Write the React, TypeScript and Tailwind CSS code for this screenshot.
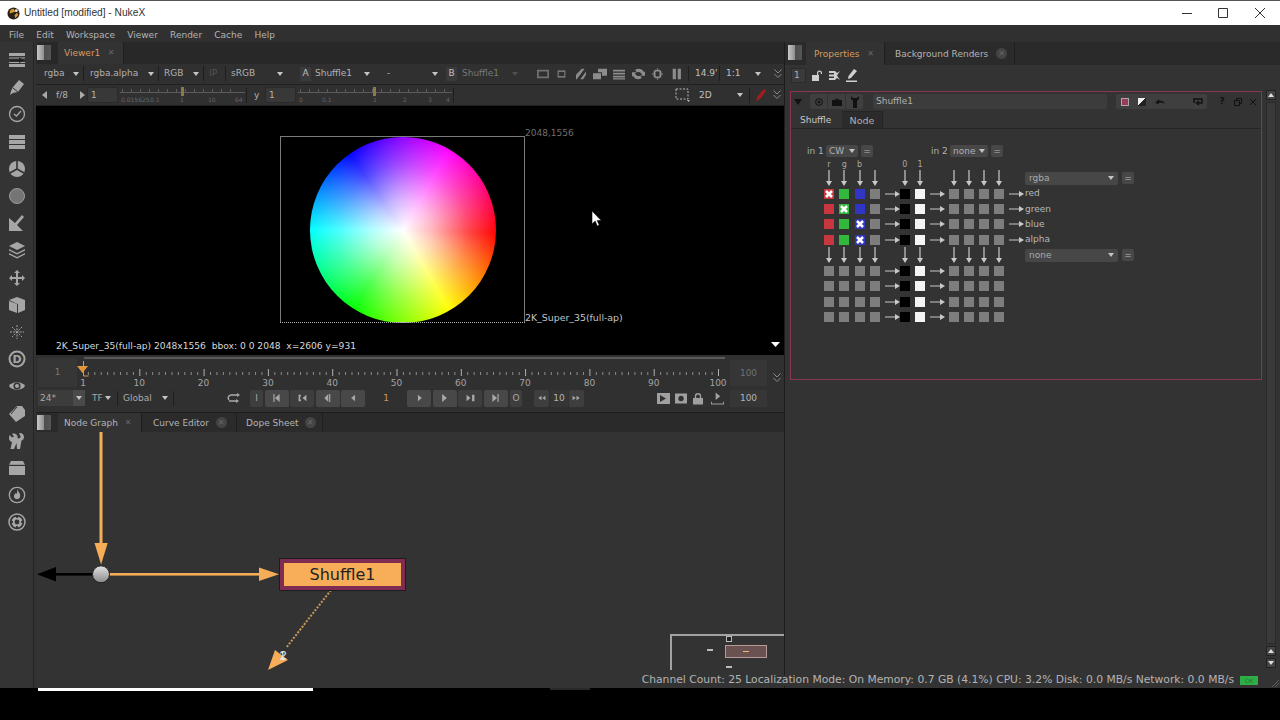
import React from 'react';

const Tri = ({ className = 'text-[#c4c4c4]' }: { className?: string }) => (
  <svg viewBox="0 0 6 4" className={`w-[6px] h-[4px] shrink-0 ${className}`}><path d="M0 0h6L3 4z" fill="currentColor" /></svg>
);
const Sep = ({ m = 'mx-[3px]' }: { m?: string }) => <div className={`w-px h-[15px] bg-[#1e1e1e] shrink-0 ${m}`} />;
const Chevrons = () => (
  <svg viewBox="0 0 8 10" className="w-[8px] h-[10px] text-[#8a8a8a] shrink-0" fill="none" stroke="currentColor"><path d="M.5 .5 4 4 7.5 .5M.5 5 4 8.5 7.5 5" /></svg>
);
const Grip = () => (
  <div className="w-[14px] h-[15px] shrink-0 bg-[linear-gradient(90deg,#c8c8c8_0%,#8e8e8e_50%,#4e4e4e_50%,#555_100%)]" />
);
const Close = ({ round = false }: { round?: boolean }) => (
  <span className={`flex items-center justify-center w-[11px] h-[11px] rounded-full text-[8px] font-bold ${round ? 'bg-[#444] text-[#666]' : 'text-[#666]'}`}>✕</span>
);

function Tab({ label, active, accent, w, pad }: { label: string; active?: boolean; accent?: boolean; w: string; pad: string }) {
  return (
    <div className={`${w} ${pad} h-full flex items-center justify-between shrink-0 border-r border-[#1f1f1f] rounded-t-[2px] ${active ? 'bg-[#333]' : 'bg-[#2b2b2b]'}`}>
      <span className={`pt-[1px] ${accent ? 'text-[#d89a5f]' : 'text-[#b4b4b4]'}`}>{label}</span>
      <Close round={!active} />
    </div>
  );
}

/* left tool bar */
const I = ({ children }: { children: React.ReactNode }) => (
  <div className="h-[27.2px] flex items-center justify-center shrink-0">
    <svg viewBox="0 0 18 18" className="w-[18px] h-[18px] text-[#a6a6a6]" fill="currentColor">{children}</svg>
  </div>
);
function Toolbar() {
  return (
    <div className="w-[34px] shrink-0 flex flex-col pt-[4.5px] border-r border-[#232323] bg-[#343434]">
      <I><path d="M1 2h16v3H1zM1 13h16v3H1zM1 6.500h16v1H1zM1 11h16v1H1z" /><path d="M2 8.500h9V6.500l5 2.700-5 2.700V10H2z" fill="#222" /></I>
      <I><path d="M11 2l5 4-6 8-5 1-3 2 1-4 2-4z" /><path d="M5 10l5 4" stroke="#333" strokeWidth="1" /></I>
      <I><circle cx="9" cy="9" r="7.500" fill="none" stroke="currentColor" strokeWidth="1.300" /><path d="M6 9l2.400 2L13 6" fill="none" stroke="currentColor" strokeWidth="1.300" /></I>
      <I><path d="M1 2h16v4H1zM1 7h16v4H1zM1 12h16v4H1z" /></I>
      <I><circle cx="9" cy="9" r="8" /><path d="M9 9V1M9 9l7 4M9 9l-7 4" stroke="#333" strokeWidth="1.600" /></I>
      <I><circle cx="9" cy="9" r="7.500" fill="#757575" stroke="#9c9c9c" /></I>
      <I><path d="M1 4v13h14L9 11l7-8-2-2-7 8z" /></I>
      <I><path d="M9 1l8 4-8 4-8-4z" /><path d="M1 8l8 4 8-4v1.600l-8 4-8-4zM1 12l8 4 8-4v1.500l-8 4-8-4z" /></I>
      <I><path d="M9 1l3 3h-2v4h4V6l3 3-3 3v-2h-4v4h2l-3 3-3-3h2v-4H4v2L1 9l3-3v2h4V4H6z" /></I>
      <I><path d="M9 1l8 3v10l-7 3V8l-1-.3L1 4zM1 5l8 3v9l-8-3z" /></I>
      <I><path d="M9 2v14M2 9h14M4 4l10 10M14 4L4 14" stroke="currentColor" strokeWidth="1" strokeDasharray="2 1.200" /></I>
      <I><circle cx="9" cy="9" r="7.500" fill="none" stroke="currentColor" strokeWidth="2" /><text x="9" y="13" textAnchor="middle" fontSize="11" fontWeight="700" fill="currentColor" fontFamily="DejaVu Sans">D</text></I>
      <I><path d="M1 9c3-5 13-5 16 0-3 5-13 5-16 0z" /><circle cx="9" cy="9" r="3.600" fill="#333" /><circle cx="9" cy="9" r="2" /></I>
      <I><path d="M9 1h5l3 4v6l-9 6-7-8z" /><path d="M3 9l6-7" stroke="#333" /></I>
      <I><path d="M11 1c3-.5 5 1.500 5 4 0 2-1 3-2.500 3.500L12 17H9l-.5-6L6 17H2.500L4 10C2 9.500 1 8 1 6c0-1 .3-2 .8-3l2.200 2.500 2-1L4 2c1-.5 2-.6 3-.3 2 .6 3 2.300 2.500 4.300l1.500.5 1.800-1.500L11 1z" /></I>
      <I><path d="M1 7h16v9H1zM3 2h12l2 4H1z" /><path d="M1 6.300h16" stroke="#333" /></I>
      <I><circle cx="9" cy="9" r="7.700" fill="none" stroke="currentColor" strokeWidth="1.300" /><path d="M9 3c1 3 4 4 3 8-1 3-5 3-6 0-.5-2 1-3 1.500-4 .5 1 1 1 1.500 0 .5-1 0-3 0-4z" /></I>
      <I><circle cx="9" cy="9" r="8" fill="none" stroke="currentColor" strokeWidth="1.500" /><circle cx="9" cy="9" r="5.500" /><circle cx="9" cy="9" r="2.400" fill="#333" /><circle cx="9" cy="3.800" r="1.200" fill="#333" /><circle cx="9" cy="14.200" r="1.200" fill="#333" /><circle cx="3.800" cy="9" r="1.200" fill="#333" /><circle cx="14.200" cy="9" r="1.200" fill="#333" /></I>
    </div>
  );
}

/* viewer toolbar icons */
const V = ({ children, c }: { children: React.ReactNode; c: string }) => (
  <svg viewBox="0 0 14 14" preserveAspectRatio="none" className={`${c} h-[12px] shrink-0 text-[#8c8c8c]`} fill="currentColor">{children}</svg>
);

function ViewerRowOne() {
  return (
    <div className="h-[21px] shrink-0 flex items-center pl-[8px] pb-[1px] border-b border-[#202020] bg-[#303030] text-[#b0b0b0]">
      <div className="w-[35px] flex items-center justify-between"><span>rgba</span><Tri /></div>
      <Sep m="ml-[4px] mr-[6px]" />
      <div className="w-[64px] flex items-center justify-between"><span>rgba.alpha</span><Tri /></div>
      <Sep m="ml-[4px] mr-[5px]" />
      <div className="w-[35px] flex items-center justify-between"><span>RGB</span><Tri /></div>
      <Sep m="ml-[4px] mr-[5px]" />
      <span className="w-[14px] text-[#555]">IP</span>
      <Sep m="ml-[2px] mr-[5px]" />
      <div className="w-[52px] flex items-center justify-between"><span>sRGB</span><Tri /></div>
      <div className="ml-[17px] w-[11px] h-[14px] flex items-center justify-center bg-[#3a3a3a] text-[#c0c0c0]">A</div>
      <div className="ml-[4px] w-[55px] flex items-center justify-between"><span>Shuffle1</span><Tri /></div>
      <div className="ml-[17px] w-[51px] flex items-center justify-between"><span>-</span><Tri /></div>
      <div className="ml-[8px] w-[11px] h-[14px] flex items-center justify-center bg-[#3a3a3a] text-[#c0c0c0]">B</div>
      <div className="ml-[5px] w-[56px] flex items-center justify-between text-[#777]"><span>Shuffle1</span><Tri className="text-[#4e4e4e]" /></div>
      <V c="ml-[19px] w-[12px]"><path d="M0 2h14v10H0zM2 4v6h10V4z" fillOpacity=".7" fillRule="evenodd" /></V>
      <V c="ml-[8px] w-[9px]"><path d="M1 3h12v8H1zM2.500 4.500v5h9v-5z" fillRule="evenodd" /></V>
      <V c="ml-[10px] w-[10px]"><path d="M0 8L8 1h4L1 13H0zM6 13L14 4v4l-4 5z" /></V>
      <V c="ml-[7px] w-[14px]"><path d="M5 1h9v8H9V5H5zM0 6h8v7H0z" /></V>
      <V c="ml-[6px] w-[12px]"><path d="M0 2h14v2H0zM0 5.500h14v2H0zM0 9h14v2H0zM0 12h14v1.500H0z" /></V>
      <V c="ml-[7px] w-[13px]"><path d="M7 1a6 6 0 0 1 5.600 3.800L14 4v5H9l1.700-1.200A4 4 0 0 0 5 5L3.400 2.300A6 6 0 0 1 7 1zM7 13a6 6 0 0 1-5.600-3.800L0 10V5h5L3.300 6.200A4 4 0 0 0 9 9l1.600 2.700A6 6 0 0 1 7 13z" /></V>
      <V c="ml-[7px] w-[11px]"><path d="M4 2h6l2 2v6l-2 2H4l-2-2V4zM4.500 4v6h5V4z" fillRule="evenodd" /><path d="M6.500 0h1v2h-1zM6.500 12h1v2h-1zM0 6.500h2v1H0zM12 6.500h2v1h-2z" /></V>
      <V c="ml-[9px] w-[10px]"><path d="M1 1h4.500v12H1zM8 1h4.500v12H8z" /></V>
      <Sep m="ml-[6px] mr-[6px]" />
      <span className="w-[24px] text-[#c0c0c0]">14.9'</span>
      <Sep m="mr-[6px]" />
      <div className="w-[35px] flex items-center justify-between text-[#c0c0c0]"><span>1:1</span><Tri /></div>
      <div className="ml-[13px]"><Chevrons /></div>
    </div>
  );
}

function Slider({ w, thumb, marks }: { w: number; thumb: number; marks: [number, string][] }) {
  const ticks = Array.from({ length: Math.floor(w / 9) }, (_, i) => i * 9 + 2);
  return (
    <div className="relative h-[18px] shrink-0" style={{ width: w }}>
      <svg className="absolute inset-0 w-full h-full text-[#5c5c5c]" fill="currentColor">
        <rect x="0" y="6" width={w} height="1" />
        {ticks.map(t => <rect key={t} x={t} y="3" width="1" height="3" />)}
        <rect x={thumb - 1} y="1" width="3" height="9" fill="#8d7a4a" />
      </svg>
      {marks.map(([x, s]) => (
        <span key={s} className="absolute top-[10px] text-[6px] leading-[8px] text-[#666]" style={{ left: x }}>{s}</span>
      ))}
    </div>
  );
}

function ViewerRowTwo() {
  return (
    <div className="h-[21px] shrink-0 flex items-center pl-[6px] border-b border-[#202020] bg-[#303030] text-[#b0b0b0]">
      <svg viewBox="0 0 5 8" className="w-[5px] h-[8px] text-[#aaa] shrink-0"><path d="M5 0v8L0 4z" fill="currentColor" /></svg>
      <span className="ml-[9px] w-[24px]">f/8</span>
      <svg viewBox="0 0 5 8" className="w-[5px] h-[8px] text-[#aaa] shrink-0"><path d="M0 0v8l5-4z" fill="currentColor" /></svg>
      <div className="ml-[2px] w-[31px] h-[16px] flex items-center pl-[3px] bg-[#383838] border border-[#2a2a2a] rounded-[2px]">1</div>
      <div className="ml-[2px]"><Slider w={125} thumb={62} marks={[[1, '0.015625'], [30, '0.1'], [60, '1'], [88, '10'], [115, '64']]} /></div>
      <Sep m="ml-[1px]" />
      <span className="ml-[7px] w-[11px]">y</span>
      <div className="w-[31px] h-[16px] flex items-center pl-[3px] bg-[#383838] border border-[#2a2a2a] rounded-[2px]">1</div>
      <div className="ml-[2px]"><Slider w={154} thumb={76} marks={[[1, '0'], [24, '0.1'], [75, '1'], [105, '2'], [130, '3'], [148, '4']]} /></div>
      <Sep m="ml-[1px]" />
      <div className="flex-1" />
      <svg viewBox="0 0 16 14" className="w-[16px] h-[14px] text-[#b8b8b8] shrink-0" fill="none" stroke="currentColor" strokeDasharray="2 1.500"><path d="M1 1h12v10H1z" /><path d="M12 12l3 0-1.500 2z" fill="currentColor" stroke="none" /></svg>
      <span className="ml-[8px] w-[38px] text-[#c0c0c0]">2D</span>
      <Tri />
      <Sep m="mx-[6px]" />
      <svg viewBox="0 0 10 12" className="w-[10px] h-[12px] shrink-0"><path d="M8 0l2 2-6 8-4 2 1-4z" fill="#a31b1b" /></svg>
      <div className="ml-[7px] mr-[3px]"><Chevrons /></div>
    </div>
  );
}

function Viewport() {
  return (
    <div className="relative h-[229px] shrink-0 bg-black text-[#6f6f6f]">
      <div className="absolute left-[244px] top-[30px] w-[245px] h-[187px] border-t border-x border-[#7a7a7a]">
        <div className="absolute left-[29px] top-0 w-[186px] h-[186px] rounded-full bg-[radial-gradient(circle,#ffffff_0%,rgba(255,255,255,0.72)_22%,rgba(255,255,255,0.28)_50%,rgba(255,255,255,0)_72%),conic-gradient(#9000ff,#ff00ff_30deg,#ff0000_92deg,#ffff00_150deg,#00ff00_212deg,#00ffff_270deg,#0000ff_325deg,#9000ff)]" />
        <div className="absolute -left-px -right-px bottom-0 border-b border-dotted border-[#b0b0b0]" />
      </div>
      <span className="absolute left-[489px] top-[23px]">2048,1556</span>
      <span className="absolute left-[489px] top-[207px] text-[9.400px] text-[#c4c4c4]">2K_Super_35(full-ap)</span>
      <svg viewBox="0 0 11 17" className="absolute left-[556px] top-[105px] w-[11px] h-[17px]"><path d="M0 0v13l3.200-3 2 5 2-1-2-4.500h4z" fill="#fff" stroke="#111" strokeWidth=".6" /></svg>
    </div>
  );
}

const FRAME_LABELS = [1, 10, 20, 30, 40, 50, 60, 70, 80, 90, 100];
const frameX = (f: number) => (f === 1 ? 47 : 39 + f * 6.43);

function Btn({ w, children, dark }: { w: string; children: React.ReactNode; dark?: boolean }) {
  return (
    <div className={`${w} h-[17px] flex items-center justify-center shrink-0 rounded-[2px] text-[#a8a8a8] ${dark ? 'bg-[#3e3e3e]' : 'bg-[#484848]'}`}>
      {children}
    </div>
  );
}
const G = ({ d }: { d: string }) => (
  <svg viewBox="0 0 14 10" className="w-[11px] h-[8px]" fill="currentColor"><path d={d} /></svg>
);

function Timeline() {
  return (
    <div className="h-[58px] shrink-0 flex flex-col border-b border-[#1d1d1d] bg-[#303030] text-[#a8a8a8]">
      <div className="relative h-[33px] shrink-0">
        <div className="absolute left-[48px] top-[2px] w-[641px] h-[2px] bg-[#5a5a5a]" />
        <div className="absolute left-[2px] top-[3px] w-[39px] h-[29px] flex items-center justify-center bg-[#363636] text-[#777]">1</div>
        <div className="absolute left-[694px] top-[5px] w-[37px] h-[26px] flex items-center justify-center bg-[#363636] text-[#6f6f6f]">100</div>
        <svg className="absolute inset-0 w-full h-full">
          {Array.from({ length: 100 }, (_, i) => {
            const major = (i + 1) % 10 === 0 || i === 0;
            return <rect key={i} x={frameX(i + 1)} y={major ? 14 : 17} width="1" height={major ? 7 : 3} fill={major ? '#b0b0b0' : '#8c8c8c'} />;
          })}
          <path d="M41 11h11l-5.500 7z" fill="#e2963c" />
          <path d="M47.500 6v15h5" fill="none" stroke="#e2963c" />
        </svg>
        {FRAME_LABELS.map(f => (
          <span key={f} className="absolute top-[22px] w-[24px] text-center leading-[12px] text-[#a4a4a4]" style={{ left: frameX(f) - 12 }}>{f}</span>
        ))}
        <div className="absolute right-[3px] top-[18px]"><Chevrons /></div>
      </div>
      <div className="h-[19px] flex items-center pl-[2px] pt-[1px] text-[#a8a8a8]">
        <div className="w-[35px] h-[16px] flex items-center pl-[2px] bg-[#3c3c3c]">24*</div>
        <div className="w-[12px] h-[16px] flex items-center justify-center bg-[#4a4a4a]"><Tri /></div>
        <div className="ml-[7px] w-[19px] flex items-center justify-between"><span>TF</span><Tri /></div>
        <Sep m="ml-[6px] mr-[5px]" />
        <div className="w-[45px] flex items-center justify-between"><span>Global</span><Tri /></div>
        <Sep m="ml-[5px]" />
        <svg viewBox="0 0 14 12" className="ml-[53px] w-[14px] h-[12px] shrink-0" fill="none" stroke="currentColor" strokeWidth="1.400"><path d="M11 3H4a3 3 0 0 0-2 5M2 9h7" /><path d="M10 1l3 2-3 2zM9 7l3 2-3 2z" fill="currentColor" stroke="none" /></svg>
        <div className="ml-[9px] flex items-center gap-[1.500px]">
          <Btn w="w-[13px]" dark><span className="text-[9px]">I</span></Btn>
          <Btn w="w-[24px]"><G d="M3 0h1.500v10H3zM11 0v10L5 5z" /></Btn>
          <Btn w="w-[24px]" dark><G d="M2 1h3v2H4v4h1v2H2zM12 1v8L7 5z" /></Btn>
          <Btn w="w-[24px]"><G d="M9 0h1.500v10H9zM8 0v10L3 5z" /></Btn>
          <Btn w="w-[24px]"><G d="M9 1v8L4 5z" /></Btn>
          <div className="w-[39px] h-[17px] flex items-center justify-center bg-[#303030] text-[#d39a52]">1</div>
          <Btn w="w-[24px]"><G d="M5 1v8l5-4z" /></Btn>
          <Btn w="w-[24px]"><G d="M4 0v10l6-5z" /></Btn>
          <Btn w="w-[24px]" dark><G d="M2 1v8l5-4zM9 1h3v8H9z" /></Btn>
          <Btn w="w-[24px]"><G d="M3 0v10l6-5zM9.500 0H11v10H9.500z" /></Btn>
          <div className="ml-[1px]"><Btn w="w-[12px]" dark><span>O</span></Btn></div>
          <div className="ml-[10.500px]"><Btn w="w-[15px]" dark><G d="M7 2v6L3 5zM12 2v6L8 5z" /></Btn></div>
          <div className="w-[17px] h-[17px] flex items-center justify-center bg-[#353535] text-[#b4b4b4]">10</div>
          <Btn w="w-[15px]" dark><G d="M2 2v6l4-3zM7 2v6l4-3z" /></Btn>
        </div>
        <svg viewBox="0 0 13 11" className="ml-[73px] w-[13px] h-[11px] text-[#a0a0a0] shrink-0" fill="currentColor"><path d="M0 0h13v11H0zM3 2v7l6-3.500z" fillRule="evenodd" /></svg>
        <svg viewBox="0 0 13 11" className="ml-[5px] w-[12px] h-[11px] text-[#a0a0a0] shrink-0" fill="currentColor"><path d="M0 0h13v11H0zM6.500 2.500a3 3 0 1 0 .1 0z" fillRule="evenodd" /></svg>
        <svg viewBox="0 0 11 13" className="ml-[6px] w-[10px] h-[13px] text-[#a0a0a0] shrink-0" fill="currentColor"><path d="M0 6h11v7H0zM2 6V4a3.500 3.500 0 0 1 7 0v2H7.500V4a2 2 0 0 0-4 0v2z" /></svg>
        <svg viewBox="0 0 14 13" className="ml-[8px] w-[13px] h-[13px] text-[#a0a0a0] shrink-0" fill="currentColor"><path d="M5 0l5 4-5 4zM0 10h1v2h12v-2h1v3H0z" /></svg>
        <div className="ml-[6px] w-[37px] h-[17px] flex items-center justify-center bg-[#363636] text-[#b4b4b4]">100</div>
      </div>
    </div>
  );
}

function NodeGraph() {
  return (
    <div className="relative flex-1 bg-[#333] overflow-hidden">
      <svg className="absolute inset-0 w-full h-full">
        <defs>
          <linearGradient id="dot" x1="0" y1="0" x2="0" y2="1"><stop offset="0" stopColor="#e2e2e2" /><stop offset="1" stopColor="#8a8a8a" /></linearGradient>
        </defs>
        <rect x="63.500" y="0" width="3" height="115" fill="#f5ad57" />
        <path d="M58.500 111h13.200l-6.600 21.500z" fill="#f5ad57" />
        <rect x="5" y="141" width="58" height="2.600" fill="#000" />
        <path d="M1 142.300 20 135v14.600z" fill="#000" />
        <rect x="70" y="141" width="160" height="2.600" fill="#f5ad57" />
        <path d="M223 135.500l20 6.800-20 6.800z" fill="#f5ad57" />
        <circle cx="65" cy="142.300" r="8.500" fill="url(#dot)" stroke="#222" />
        <path d="M295 158l-45 58" stroke="#c99a5b" strokeWidth="2" strokeDasharray="2 1.500" />
        <path d="M232 238l7-20 13 10z" fill="#f5ad57" />
      </svg>
      <div className="absolute left-[244px] top-[127px] w-[125px] h-[31px] flex items-center justify-center bg-[#f8ae58] border-[4px] border-[#7e2c52] outline outline-1 outline-[#1d1d1d] text-[16px] text-[#222]">Shuffle1</div>
      <span className="absolute left-[244px] top-[217px] text-[11px] leading-[14px] text-[#e6e6e6]">2</span>
      <span className="absolute left-[243px] top-[218px] text-[11px] leading-[14px] text-[#e6e6e6]">1</span>
      {/* minimap */}
      <div className="absolute left-[634px] top-[202px] w-[114px] h-[36px] border-t-2 border-l-2 border-[#a2a2a2]">
        <div className="absolute left-[54px] top-[0px] w-[6px] h-[6px] border border-[#bbb] bg-[#222]" />
        <div className="absolute left-[35px] top-[13px] w-[6px] h-[1.500px] bg-[#bbb]" />
        <div className="absolute left-[54px] top-[30px] w-[6px] h-[1.500px] bg-[#bbb]" />
        <div className="absolute left-[53px] top-[9px] w-[42px] h-[13px] flex items-center justify-center bg-[#6b5252] border border-[#b59a9a]">
          <div className="w-[6px] h-[1.500px] bg-[#f3b878]" />
        </div>
      </div>
    </div>
  );
}

const SQ = {
  red: 'bg-[#c7373d]',
  green: 'bg-[#33b83e]',
  blue: 'bg-[#3135c4]',
  gray: 'bg-[#7d7d7d]',
  black: 'bg-black',
  white: 'bg-[#f4f4f4]',
};

const Sq = ({ c, x }: { c: keyof typeof SQ; x?: boolean }) => (
  <div className={`w-[10px] h-[10px] shrink-0 flex items-center justify-center ${SQ[c]}`}>
    {x && <svg viewBox="0 0 10 10" className="w-[10px] h-[10px]"><path d="M2 2l6 6M8 2l-6 6" stroke="#fff" strokeWidth="2.600" /></svg>}
  </div>
);
const RArrow = () => (
  <svg viewBox="0 0 15 6" className="w-[15px] h-[6px] shrink-0"><path d="M0 2.400h10V0l5 3-5 3V3.600H0z" fill="#c8c8c8" /></svg>
);
const DArrow = () => (
  <div className="w-[10px] flex justify-center shrink-0">
    <svg viewBox="0 0 6 16" className="w-[6px] h-[16px]"><path d="M2.400 0h1.200v11H6l-3 5-3-5h2.400z" fill="#c8c8c8" /></svg>
  </div>
);
const Cells = ({ children }: { children: React.ReactNode }) => <div className="flex gap-[5.250px] shrink-0">{children}</div>;
const LastCells = ({ children }: { children: React.ReactNode }) => <div className="flex gap-[5px] shrink-0">{children}</div>;

function MatrixRow({ first, label }: { first: React.ReactNode[]; label?: string }) {
  return (
    <div className="h-[15.350px] flex items-center">
      <Cells>{first}</Cells>
      <div className="ml-[5px]"><RArrow /></div>
      <Cells><Sq c="black" /><Sq c="white" /></Cells>
      <div className="ml-[5px]"><RArrow /></div>
      <div className="ml-[4px]"><LastCells><Sq c="gray" /><Sq c="gray" /><Sq c="gray" /><Sq c="gray" /></LastCells></div>
      {label && <><div className="ml-[5px]"><RArrow /></div><span className="ml-[1px] text-[#b8b8b8]">{label}</span></>}
    </div>
  );
}
function ArrowRow({ right }: { right: string }) {
  return (
    <div className="h-[16px] flex items-center">
      <Cells><DArrow /><DArrow /><DArrow /><DArrow /></Cells>
      <div className="ml-[20px]"><Cells><DArrow /><DArrow /></Cells></div>
      <div className="ml-[24px]"><LastCells><DArrow /><DArrow /><DArrow /><DArrow /></LastCells></div>
      <div className="ml-[21px] w-[93px] h-[13px] flex items-center justify-between px-[4px] rounded-[2px] bg-[#474747] text-[#aaa]"><span>{right}</span><Tri /></div>
      <div className="ml-[4px] w-[12px] h-[12px] flex items-center justify-center rounded-[2px] bg-[#474747] text-[#bbb]">=</div>
    </div>
  );
}
const gr = [0, 1, 2, 3].map(i => <Sq key={i} c="gray" />);

function Properties() {
  return (
    <div className="flex-1 relative flex flex-col min-w-0 bg-[#333] text-[#b0b0b0]">
      <div className="h-[23px] shrink-0 flex items-end pl-[3px] bg-[#2a2a2a]">
        <div className="self-start mt-[3px]"><Grip /></div>
        <div className="ml-[4px] h-full"><Tab label="Properties" active accent w="w-[79px]" pad="pl-[8px] pr-[8px]" /></div>
        <div className="ml-[2px] h-full"><Tab label="Background Renders" w="w-[128px]" pad="pl-[8px] pr-[7px]" /></div>
      </div>
      <div className="h-[21px] shrink-0 flex items-center pl-[6px] gap-[6px]">
        <div className="w-[15px] h-[15px] flex items-center pl-[2px] bg-[#3a3a3a] border border-[#2b2b2b]">1</div>
        <svg viewBox="0 0 11 11" className="w-[11px] h-[11px] text-[#d0d0d0] shrink-0" fill="currentColor"><path d="M0 5h7v6H0zM5 5V3a2.500 2.500 0 0 1 5 0v1H8.800V3a1.300 1.300 0 0 0-2.600 0v2z" /></svg>
        <svg viewBox="0 0 11 9" className="w-[11px] h-[9px] text-[#cfcfcf] shrink-0" fill="currentColor"><path d="M0 0h6l2 2 3-2-3 4.500L11 9 8 7 6 9H0V7h5V5.500H0V3.500h5V2H0z" /></svg>
        <svg viewBox="0 0 11 13" className="w-[11px] h-[13px] text-[#d0d0d0] shrink-0" fill="currentColor"><path d="M8 0l3 2-6 7-3 1 .5-3zM0 11.500h11V13H0z" /></svg>
      </div>
      {/* node panel */}
      <div className="ml-[5px] mt-[5px] mr-[18px] h-[289px] shrink-0 border border-[#8a3555] flex flex-col">
        <div className="h-[19px] shrink-0 flex items-center pl-[3px]">
          <svg viewBox="0 0 8 6" className="w-[8px] h-[6px] text-[#111] shrink-0"><path d="M0 0h8L4 6z" fill="currentColor" /></svg>
          <div className="ml-[8px] w-[53px] h-[15px] flex items-center bg-[#3f3f3f] rounded-[2px] divide-x divide-[#333]">
            <div className="w-[18px] h-full flex items-center justify-center"><svg viewBox="0 0 8 8" className="w-[8px] h-[8px] text-[#111]" fill="none" stroke="currentColor"><circle cx="4" cy="4" r="3.400" /><circle cx="4" cy="4" r="1" fill="currentColor" /></svg></div>
            <div className="w-[18px] h-full flex items-center justify-center"><svg viewBox="0 0 10 8" className="w-[10px] h-[8px]"><path d="M0 2h3l1-2 1 2 1-2 1 2h3v6H0z" fill="#111" /></svg></div>
            <div className="w-[17px] h-full flex items-center justify-center"><svg viewBox="0 0 10 12" className="w-[10px] h-[12px]"><path d="M1 0v3l2 2v7h4V5l2-2V0L7 2H3z" fill="#111" /></svg></div>
          </div>
          <div className="ml-[10px] w-[234px] h-[15px] flex items-center pl-[3px] bg-[#3c3c3c] rounded-[2px] text-[#b0b0b0]">Shuffle1</div>
          <div className="ml-[9px] w-[91px] h-[15px] flex items-center justify-around bg-[#3f3f3f] rounded-[2px]">
            <div className="w-[8px] h-[8px] bg-[#9a3a5c] border border-[#aaa]" />
            <div className="w-[8px] h-[8px] bg-[linear-gradient(135deg,#eee_50%,#222_50%)]" />
            <svg viewBox="0 0 10 7" className="w-[10px] h-[7px]"><path d="M0 5l4-4v1.500c3 0 5 1 6 3.500-2-1.500-3-1.500-6-1.500V6z" fill="#111" /></svg>
            <div className="w-[10px]" />
            <svg viewBox="0 0 10 10" className="w-[10px] h-[10px]" fill="none" stroke="#111" strokeWidth="1.500"><path d="M1 6V2h8v4H5" /><path d="M6 4L3.500 6 6 8" /></svg>
          </div>
          <span className="ml-[10px] w-[10px] text-center font-bold text-[#111]">?</span>
          <svg viewBox="0 0 8 8" className="ml-[7px] w-[8px] h-[8px] text-[#111]" fill="none" stroke="currentColor"><path d="M.5 2.500h5v5h-5zM2.500 2.500v-2h5v5h-2" /></svg>
          <svg viewBox="0 0 8 8" className="ml-[7px] w-[8px] h-[8px] text-[#111]" fill="none" stroke="currentColor"><path d="M1 1l6 6M7 1L1 7" /></svg>
        </div>
        <div className="h-[18px] shrink-0 flex items-end pl-[4px] border-b border-[#252525]">
          <div className="w-[47px] h-full flex items-center pl-[5px] pt-[2px] text-[#c8c8c8]">Shuffle</div>
          <div className="w-[41px] h-full flex items-center justify-center pt-[2px] text-[9.500px] bg-[#2b2b2b] border-t border-r border-[#252525]">Node</div>
        </div>
        {/* inputs */}
        <div className="mt-[15px] h-[14px] shrink-0 flex items-center pl-[16px]">
          <span className="w-[19px]">in 1</span>
          <div className="w-[32px] h-[12px] flex items-center justify-between px-[3px] rounded-[2px] bg-[#474747]"><span>CW</span><Tri /></div>
          <div className="ml-[3px] w-[12px] h-[12px] flex items-center justify-center rounded-[2px] bg-[#474747]">=</div>
          <span className="ml-[58px] w-[19px]">in 2</span>
          <div className="w-[38px] h-[12px] flex items-center justify-between px-[3px] rounded-[2px] bg-[#474747]"><span>none</span><Tri /></div>
          <div className="ml-[3px] w-[12px] h-[12px] flex items-center justify-center rounded-[2px] bg-[#474747]">=</div>
        </div>
        {/* shuffle matrix */}
        <div className="pl-[33px] mt-[2px]">
          <div className="h-[10px] flex items-center leading-none text-[#a8a8a8] text-[8px]">
            <Cells>
              <span className="w-[10px] text-center">r</span>
              <span className="w-[10px] text-center">g</span>
              <span className="w-[10px] text-center">b</span>
              <span className="w-[10px]" />
            </Cells>
            <div className="ml-[20px]"><Cells><span className="w-[10px] text-center">0</span><span className="w-[10px] text-center">1</span></Cells></div>
          </div>
          <ArrowRow right="rgba" />
          <MatrixRow label="red" first={[<Sq key="a" c="red" x />, <Sq key="b" c="green" />, <Sq key="c" c="blue" />, <Sq key="d" c="gray" />]} />
          <MatrixRow label="green" first={[<Sq key="a" c="red" />, <Sq key="b" c="green" x />, <Sq key="c" c="blue" />, <Sq key="d" c="gray" />]} />
          <MatrixRow label="blue" first={[<Sq key="a" c="red" />, <Sq key="b" c="green" />, <Sq key="c" c="blue" x />, <Sq key="d" c="gray" />]} />
          <MatrixRow label="alpha" first={[<Sq key="a" c="red" />, <Sq key="b" c="green" />, <Sq key="c" c="blue" x />, <Sq key="d" c="gray" />]} />
          <ArrowRow right="none" />
          <MatrixRow first={gr} />
          <MatrixRow first={gr} />
          <MatrixRow first={gr} />
          <MatrixRow first={gr} />
        </div>
      </div>
      {/* scrollbar */}
      <div className="absolute right-[4px] top-[48px] bottom-[20px] w-[10px] flex flex-col gap-[2px]">
        <div className="h-[10px] flex items-center justify-center bg-[#444] border border-[#222]"><svg viewBox="0 0 6 4" className="w-[6px] h-[4px] rotate-180 text-[#ddd]"><path d="M0 0h6L3 4z" fill="currentColor" /></svg></div>
        <div className="flex-1 bg-[#3a3a3a] border border-[#2a2a2a]" />
        <div className="h-[10px] flex items-center justify-center bg-[#444] border border-[#222]"><svg viewBox="0 0 6 4" className="w-[6px] h-[4px] rotate-180 text-[#ddd]"><path d="M0 0h6L3 4z" fill="currentColor" /></svg></div>
        <div className="h-[10px] flex items-center justify-center bg-[#444] border border-[#222]"><svg viewBox="0 0 6 4" className="w-[6px] h-[4px] text-[#ddd]"><path d="M0 0h6L3 4z" fill="currentColor" /></svg></div>
      </div>
      <svg viewBox="0 0 8 8" className="absolute right-[1px] bottom-[1px] w-[8px] h-[8px]" fill="none" stroke="#5a5a5a"><path d="M8 1L1 8M8 4L4 8" /></svg>
    </div>
  );
}

export default function App() {
  return (
    <div className="w-[1280px] h-[720px] flex flex-col overflow-hidden bg-black font-['DejaVu_Sans',sans-serif] text-[9px] leading-none">
      {/* window title bar */}
      <div className="h-[25px] shrink-0 flex items-center bg-white border-t border-[#555]">
        <svg viewBox="0 0 14 14" className="ml-[7px] w-[13px] h-[13px] shrink-0"><circle cx="7" cy="7" r="6.500" fill="#2a2015" /><path d="M3 7a4 4 0 0 1 4-5l2 3-3 1zM8 9l3-3 1 3-3 3z" fill="#d59b33" /><circle cx="10" cy="4" r="1.500" fill="#eee" /></svg>
        <span className="ml-[4px] text-[10.200px] text-[#333] font-['Liberation_Sans',sans-serif]">Untitled [modified] - NukeX</span>
        <div className="flex-1" />
        <svg viewBox="0 0 10 10" className="w-[10px] h-[10px] text-[#333] shrink-0 mr-[26px]" fill="none" stroke="currentColor"><path d="M0 5.500h10" /></svg>
        <svg viewBox="0 0 10 10" className="w-[10px] h-[10px] text-[#333] shrink-0 mr-[27px]" fill="none" stroke="currentColor"><path d="M.5 .5h9v9h-9z" /></svg>
        <svg viewBox="0 0 10 10" className="w-[10px] h-[10px] text-[#333] shrink-0 mr-[15px]" fill="none" stroke="currentColor"><path d="M0 0l10 10M10 0L0 10" /></svg>
      </div>
      {/* menu */}
      <div className="h-[17px] shrink-0 flex items-center pl-[9px] pt-[3px] gap-[12.200px] bg-[#303030] text-[#b4b4b4]">
        {['File', 'Edit', 'Workspace', 'Viewer', 'Render', 'Cache', 'Help'].map(m => <span key={m}>{m}</span>)}
      </div>
      <div className="relative h-[646px] shrink-0 flex bg-[#333]">
        <Toolbar />
        {/* viewer + graph */}
        <div className="w-[751px] shrink-0 flex flex-col pl-[2px] border-r border-[#1c1c1c]">
          <div className="h-[22px] shrink-0 flex items-end pl-[1px] bg-[#282828]">
            <div className="self-start mt-[3px]"><Grip /></div>
            <div className="ml-[7px] h-full"><Tab label="Viewer1" active accent w="w-[66px]" pad="pl-[6px] pr-[6.500px]" /></div>
          </div>
          <ViewerRowOne />
          <ViewerRowTwo />
          <Viewport />
          <div className="h-[20px] shrink-0 flex items-center justify-between pl-[20px] pr-[4px] pt-[3px] bg-black text-[9.150px] text-[#d8d8d8] whitespace-pre">
            <span>2K_Super_35(full-ap) 2048x1556  bbox: 0 0 2048  x=2606 y=931</span>
            <svg viewBox="0 0 9 5" className="w-[9px] h-[5px] -mt-[5px]"><path d="M0 0h9L4.500 5z" fill="#fff" /></svg>
          </div>
          <Timeline />
          <div className="h-[19px] shrink-0 flex items-end pl-[1px] bg-[#2a2a2a]">
            <div className="self-start mt-[2px]"><Grip /></div>
            <div className="ml-[7px] h-full"><Tab label="Node Graph" active w="w-[84px]" pad="pl-[6px] pr-[7.500px]" /></div>
            <div className="ml-[1px] h-full"><Tab label="Curve Editor" w="w-[94px]" pad="pl-[10px] pr-[9.500px]" /></div>
            <div className="h-full"><Tab label="Dope Sheet" w="w-[86px]" pad="pl-[9px] pr-[6.500px]" /></div>
          </div>
          <NodeGraph />
        </div>
        <Properties />
        {/* status line */}
        <div className="absolute right-[22px] bottom-[2px] flex items-center text-[10.750px] text-[#b4b4b4] bg-[#333] pl-[5px]">
          <span>Channel Count: 25 Localization Mode: On Memory: 0.7 GB (4.1%) CPU: 3.2% Disk: 0.0 MB/s Network: 0.0 MB/s</span>
          <div className="ml-[6px] w-[18px] h-[9px] flex items-center justify-center bg-[#2fae45] text-[6px] text-[#1f7a30]">OK</div>
        </div>
      </div>
      {/* player progress */}
      <div className="h-[32px] shrink-0 flex items-start bg-black">
        <div className="ml-[38px] w-[275px] h-[3px] bg-white" />
        <div className="ml-[237px] w-[40px] h-[2px] bg-[#2a2a2a]" />
      </div>
    </div>
  );
}
